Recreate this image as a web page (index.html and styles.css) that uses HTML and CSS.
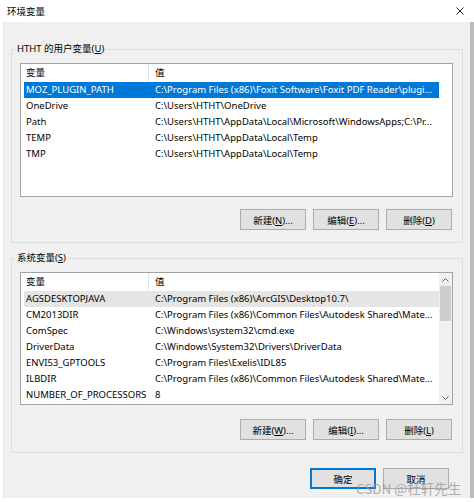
FILE: index.html
```html
<!DOCTYPE html>
<html lang="zh-CN">
<head>
    <meta charset="UTF-8">
    <title>环境变量</title>
    <link rel="stylesheet" href="styles.css">
</head>
<body>
    <div class="window">
        <div class="titlebar">
            <span class="title">环境变量</span>
            <svg class="close" width="8" height="8" viewBox="0 0 8 8">
                <path d="M0.5 0.5 L7.5 7.5 M7.5 0.5 L0.5 7.5" stroke="#1a1a1a" stroke-width="1" fill="none"/>
            </svg>
        </div>

        <div class="client">
            <!-- Пользовательские переменные -->
            <fieldset class="group">
                <legend>HTHT 的用户变量(<u>U</u>)</legend>
                <div class="list list-user">
                    <div class="list-main">
                        <div class="row head"><span class="c1">变量</span><span class="c2">值</span></div>
                        <div class="row selected"><span class="c1">MOZ_PLUGIN_PATH</span><span class="c2">C:\Program Files (x86)\Foxit Software\Foxit PDF Reader\plugi...</span></div>
                        <div class="row"><span class="c1">OneDrive</span><span class="c2">C:\Users\HTHT\OneDrive</span></div>
                        <div class="row"><span class="c1">Path</span><span class="c2">C:\Users\HTHT\AppData\Local\Microsoft\WindowsApps;C:\Pr...</span></div>
                        <div class="row"><span class="c1">TEMP</span><span class="c2">C:\Users\HTHT\AppData\Local\Temp</span></div>
                        <div class="row"><span class="c1">TMP</span><span class="c2">C:\Users\HTHT\AppData\Local\Temp</span></div>
                    </div>
                </div>
                <div class="buttons">
                    <button class="btn">新建(<u>N</u>)...</button>
                    <button class="btn">编辑(<u>E</u>)...</button>
                    <button class="btn">删除(<u>D</u>)</button>
                </div>
            </fieldset>

            <!-- Системные переменные -->
            <fieldset class="group group-system">
                <legend>系统变量(<u>S</u>)</legend>
                <div class="list list-system">
                    <div class="list-main">
                        <div class="row head"><span class="c1">变量</span><span class="c2">值</span></div>
                        <div class="row inactive"><span class="c1">AGSDESKTOPJAVA</span><span class="c2">C:\Program Files (x86)\ArcGIS\Desktop10.7\</span></div>
                        <div class="row"><span class="c1">CM2013DIR</span><span class="c2">C:\Program Files (x86)\Common Files\Autodesk Shared\Mate...</span></div>
                        <div class="row"><span class="c1">ComSpec</span><span class="c2">C:\Windows\system32\cmd.exe</span></div>
                        <div class="row"><span class="c1">DriverData</span><span class="c2">C:\Windows\System32\Drivers\DriverData</span></div>
                        <div class="row"><span class="c1">ENVI53_GPTOOLS</span><span class="c2">C:\Program Files\Exelis\IDL85</span></div>
                        <div class="row"><span class="c1">ILBDIR</span><span class="c2">C:\Program Files (x86)\Common Files\Autodesk Shared\Mate...</span></div>
                        <div class="row"><span class="c1">NUMBER_OF_PROCESSORS</span><span class="c2">8</span></div>
                    </div>
                    <div class="scrollbar">
                        <div class="sb-arrow">
                            <svg width="7" height="4" viewBox="0 0 7 4"><path d="M0.5 3.5 L3.5 0.5 L6.5 3.5" stroke="#606060" fill="none"/></svg>
                        </div>
                        <div class="sb-thumb"></div>
                        <div class="sb-track"></div>
                        <div class="sb-arrow">
                            <svg width="7" height="4" viewBox="0 0 7 4"><path d="M0.5 0.5 L3.5 3.5 L6.5 0.5" stroke="#606060" fill="none"/></svg>
                        </div>
                    </div>
                </div>
                <div class="buttons buttons-system">
                    <button class="btn">新建(<u>W</u>)...</button>
                    <button class="btn">编辑(<u>I</u>)...</button>
                    <button class="btn">删除(<u>L</u>)</button>
                </div>
            </fieldset>

            <div class="footer">
                <button class="btn default">确定</button>
                <button class="btn">取消</button>
            </div>
        </div>

        <span class="watermark">CSDN @杜轩先生</span>
    </div>
</body>
</html>
```

FILE: styles.css
```css
body {
    margin: 0;
    background: #fff;
    font-family: "Noto Sans", "Noto Sans CJK SC", sans-serif;
    font-size: 9.5px;
    color: #000;
}

.window {
    position: relative;
    width: 474px;
    height: 502px;
    display: flex;
    flex-direction: column;
}

.titlebar {
    height: 22px;
    display: flex;
    align-items: center;
    justify-content: space-between;
    padding: 0 10px 0 7px;
    background: #fff;
}

.title {
    font-size: 9.5px;
}

.client {
    box-sizing: border-box;
    width: 471px;
    height: 476px;
    margin-left: 3px;
    background: #f0f0f0;
    border-left: 1px solid #e6e6e6;
    border-right: 4px solid #bcbcbc;
    display: flex;
    flex-direction: column;
}

.group {
    margin: 19px 7px 0 7px;
    padding: 6px 9px 12px 8px;
    border: 1px solid #dcdcdc;
    min-width: 0;
}

.group-system {
    margin-top: 7px;
}

.group legend {
    margin-left: -5px;
    padding: 0 2px;
    line-height: 16px;
}

.list {
    box-sizing: border-box;
    border: 1px solid #a3a3a3;
    background: #fff;
    padding-left: 3px;
    display: flex;
}

.list-user {
    height: 134px;
}

.list-system {
    height: 133px;
}

.list-main {
    width: 415px;
}

.row {
    display: flex;
    height: 16px;
    line-height: 16px;
    white-space: nowrap;
}

.row .c1 {
    box-sizing: border-box;
    width: 125px;
    padding-left: 2px;
    overflow: hidden;
}

.row .c2 {
    box-sizing: border-box;
    width: 290px;
    padding-left: 6px;
    overflow: hidden;
}

.row.head {
    height: 18px;
    line-height: 18px;
}

.row.head .c1 {
    border-right: 1px solid #e5e5e5;
}

.row.selected {
    background: #0078d7;
    color: #fff;
}

.row.inactive {
    background: #e5e5e5;
}

.scrollbar {
    margin-left: auto;
    width: 13px;
    display: flex;
    flex-direction: column;
    background: #f0f0f0;
}

.sb-arrow {
    height: 13px;
    display: flex;
    align-items: center;
    justify-content: center;
}

.sb-thumb {
    height: 35px;
    margin: 0 1px;
    background: #cdcdcd;
}

.sb-track {
    flex: 1;
}

.buttons {
    display: flex;
    justify-content: flex-end;
    gap: 7px;
    margin-top: 12px;
    padding-right: 1px;
}

.buttons-system {
    margin-top: 14px;
}

.btn {
    box-sizing: border-box;
    width: 66px;
    height: 21px;
    padding: 0;
    background: #e1e1e1;
    border: 1px solid #adadad;
    font: inherit;
    color: #000;
}

.btn.default {
    border-color: #0078d7;
    box-shadow: inset 0 0 0 1px #0078d7;
}

.footer {
    display: flex;
    justify-content: flex-end;
    gap: 7px;
    margin-top: 15px;
    padding-right: 21px;
}

.watermark {
    position: absolute;
    left: 356px;
    top: 479px;
    font-family: "Noto Sans CJK SC", sans-serif;
    font-size: 13.5px;
    line-height: 18px;
    color: rgba(150, 150, 150, 0.75);
}
```
